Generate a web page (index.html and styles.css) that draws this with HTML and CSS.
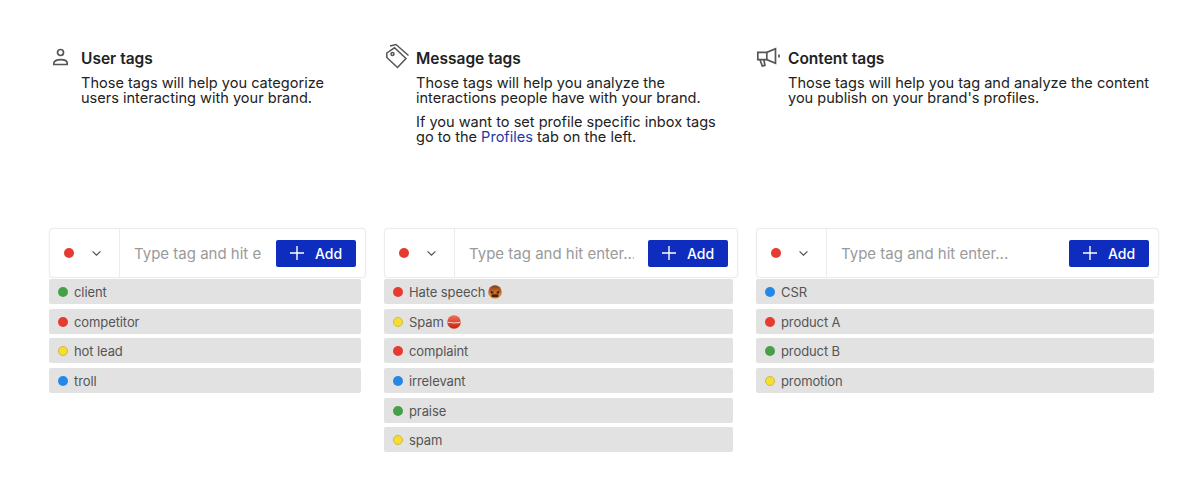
FILE: index.html
```html
<!DOCTYPE html>
<html lang="en">
<head>
<meta charset="utf-8">
<title>Tags</title>
<link rel="stylesheet" href="styles.css">
</head>
<body>
<main class="columns">
  <section class="col">
    <header class="head">
      <svg class="head-icon user-icon" viewBox="0 0 22 22"><circle cx="11.500" cy="6.500" r="3"/><path d="M4.800 18.500v-1.300c0-2.200 3-3.500 6.700-3.500s6.700 1.300 6.700 3.500v1.300z"/></svg>
      <div class="head-text">
        <h2 class="title">User tags</h2>
        <p class="desc">Those tags will help you categorize<br>users interacting with your brand.</p>
      </div>
    </header>
    <div class="entry">
      <div class="picker"><span class="dot red"></span><svg class="chev" viewBox="0 0 12 8"><path d="M1.5 1.5 6 6l4.5-4.5"/></svg></div>
      <div class="field"><span class="placeholder">Type tag and hit enter...</span></div>
      <button class="add"><svg class="plus" viewBox="0 0 14 14"><path d="M7 0v14M0 7h14"/></svg>Add</button>
    </div>
    <ul class="tags">
      <li class="tag"><span class="dot green"></span>client</li>
      <li class="tag"><span class="dot red"></span>competitor</li>
      <li class="tag"><span class="dot yellow"></span>hot lead</li>
      <li class="tag"><span class="dot blue"></span>troll</li>
    </ul>
  </section>

  <section class="col">
    <header class="head">
      <svg class="head-icon tag-icon" viewBox="0 0 26 26"><path d="M2.800 10 10.500 4.800 22 15.500 13.500 24.500 2.800 14.500z"/><circle cx="8.500" cy="11" r="1.500"/><path d="M6 3 12 1.500 24.500 12.500"/></svg>
      <div class="head-text">
        <h2 class="title">Message tags</h2>
        <p class="desc">Those tags will help you analyze the<br>interactions people have with your brand.</p>
        <p class="desc second">If you want to set profile specific inbox tags<br>go to the <a class="link" href="#">Profiles</a> tab on the left.</p>
      </div>
    </header>
    <div class="entry">
      <div class="picker"><span class="dot red"></span><svg class="chev" viewBox="0 0 12 8"><path d="M1.5 1.5 6 6l4.5-4.5"/></svg></div>
      <div class="field"><span class="placeholder">Type tag and hit enter...</span></div>
      <button class="add"><svg class="plus" viewBox="0 0 14 14"><path d="M7 0v14M0 7h14"/></svg>Add</button>
    </div>
    <ul class="tags">
      <li class="tag"><span class="dot red"></span>Hate speech
        <svg class="emoji" viewBox="0 0 14 14"><defs><linearGradient id="rage" x1="0" y1="0" x2="0" y2="1"><stop offset="0" stop-color="#7a3a18"/><stop offset=".45" stop-color="#c9682a"/><stop offset="1" stop-color="#eda13c"/></linearGradient></defs><circle cx="7" cy="7" r="6.800" fill="url(#rage)"/><path class="e-dark" d="M2.500 5.500l3 1.500v1.500H3zM11.500 5.500l-3 1.500v1.500H11z"/><rect class="e-dark" x="3.500" y="9.300" width="7" height="3" rx="1.200"/></svg></li>
      <li class="tag"><span class="dot yellow"></span>Spam
        <svg class="emoji" viewBox="0 0 16 16"><defs><linearGradient id="stopfill" x1="0" y1="0" x2="0" y2="1"><stop offset="0" stop-color="#f0705c"/><stop offset="1" stop-color="#c8220e"/></linearGradient></defs><circle cx="8" cy="8" r="7.800" fill="url(#stopfill)"/><path class="e-band" d="M.6 7.400c4 1.400 10.800 1.400 14.800 0v1.300c-4 1.400-10.800 1.400-14.800 0z"/></svg></li>
      <li class="tag"><span class="dot red"></span>complaint</li>
      <li class="tag"><span class="dot blue"></span>irrelevant</li>
      <li class="tag"><span class="dot green"></span>praise</li>
      <li class="tag"><span class="dot yellow"></span>spam</li>
    </ul>
  </section>

  <section class="col">
    <header class="head">
      <svg class="head-icon horn-icon" viewBox="0 0 26 22"><path d="M2.800 6.300h9l8.700-3.500v14.400l-8.700-3.500h-9z"/><path d="M11.800 6.300v7.400"/><path d="M5 13.700 7.300 20l2.600-.7-1-5.600"/><path d="M24 8.500v3"/></svg>
      <div class="head-text">
        <h2 class="title">Content tags</h2>
        <p class="desc">Those tags will help you tag and analyze the content<br>you publish on your brand's profiles.</p>
      </div>
    </header>
    <div class="entry">
      <div class="picker"><span class="dot red"></span><svg class="chev" viewBox="0 0 12 8"><path d="M1.5 1.5 6 6l4.5-4.5"/></svg></div>
      <div class="field"><span class="placeholder">Type tag and hit enter...</span></div>
      <button class="add"><svg class="plus" viewBox="0 0 14 14"><path d="M7 0v14M0 7h14"/></svg>Add</button>
    </div>
    <ul class="tags">
      <li class="tag"><span class="dot blue"></span>CSR</li>
      <li class="tag"><span class="dot red"></span>product A</li>
      <li class="tag"><span class="dot green"></span>product B</li>
      <li class="tag"><span class="dot yellow"></span>promotion</li>
    </ul>
  </section>
</main>
</body>
</html>
```
FILE: styles.css
```css
* { box-sizing: border-box; }
html, body { margin: 0; background: #fff; }
body { font-family: Inter, "Liberation Sans", sans-serif; color: #1f1f1f; height: 504px; overflow: hidden; }
.columns { display: grid; grid-template-columns: 317px 354px 403px; column-gap: 18px; padding: 48px 0 0 49px; }
.col { display: flex; flex-direction: column; min-width: 0; }
.head { display: flex; height: 180px; }
.head-icon { flex: none; fill: none; stroke: #555; stroke-width: 1.7; }
.user-icon { width: 22px; height: 22px; margin: -2px 10px 0 0; }
.tag-icon { width: 26px; height: 26px; margin: -5px 6px 0 0; stroke-width: 1.5; }
.horn-icon { width: 26px; height: 22px; margin: -2px 7px 0 -1px; }
.head-text { padding-top: 1px; }
.title { margin: 0 0 7px; font-size: 15.5px; line-height: 20px; font-weight: 600; color: #222; }
.desc { margin: 0; font-size: 14.55px; line-height: 15px; color: #222; }
.second { margin-top: 8.500px; }
.link { color: #1f3aa6; text-decoration: none; }
.entry { display: flex; align-items: center; height: 50px; background: #fff; border: 1px solid #ececec; border-radius: 4px; padding-right: 9px; box-shadow: 0 0 2px rgba(0,0,0,.05); }
.picker { display: flex; align-items: center; width: 70px; height: 100%; padding-left: 14px; border-right: 1px solid #ececec; flex: none; }
.chev { width: 11px; height: 7px; margin-left: 17px; fill: none; stroke: #555; stroke-width: 1.4; }
.field { flex: 1; min-width: 0; padding: 1px 14px 0 14px; }
.placeholder { display: block; overflow: hidden; white-space: nowrap; font-size: 15px; line-height: 22px; color: #9a9a9a; }
.add { display: flex; align-items: center; justify-content: center; gap: 11px; width: 80px; height: 27px; padding: 0; flex: none; background: #0e2dbf; color: #fff; border: 0; border-radius: 2px; font: 500 14px Inter, sans-serif; }
.plus { width: 14px; height: 14px; fill: none; stroke: #fff; stroke-width: 1.4; }
.tags { list-style: none; margin: 1px 0 0; padding: 0 5px 0 0; display: flex; flex-direction: column; gap: 4.67px; }
.tag { display: flex; align-items: center; gap: 6px; height: 25px; padding: 1px 0 0 9px; background: #e2e2e2; border-radius: 2px; font-size: 13px; color: #555; letter-spacing: -.1px; }
.dot { width: 10px; height: 10px; border-radius: 50%; flex: none; }
.red { background: #e53b30; }
.green { background: #46a04a; }
.yellow { background: #f7de2e; border: 1px solid #cdb84a; }
.blue { background: #2588e6; }
.emoji { width: 14px; height: 14px; margin-left: -3px; }
.e-dark { fill: #4a2310; }
.e-band { fill: #f6d6cc; }
```
